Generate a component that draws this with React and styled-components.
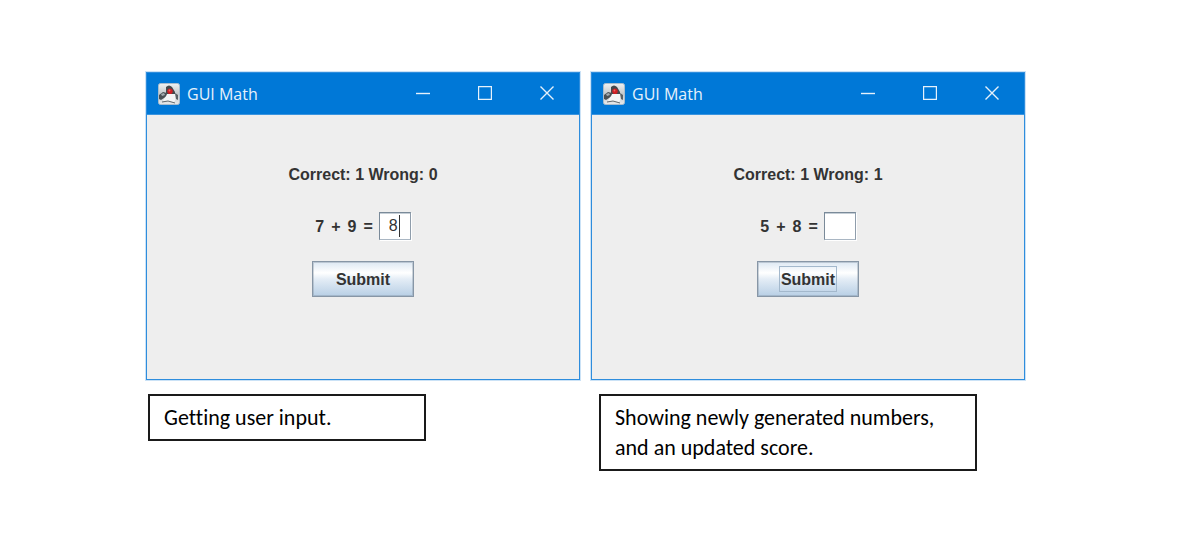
import React from "react";
import styled, { createGlobalStyle } from "styled-components";

const GlobalStyle = createGlobalStyle`
  *, *::before, *::after { box-sizing: border-box; }
  body { margin: 0; background: #fff; }
`;

const Page = styled.main`
  display: grid;
  grid-template-columns: 1fr 1fr;
  gap: 11px;
  align-items: start;
  padding: 72px 161px 72px 146px;
`;

const Example = styled.figure`
  display: flex;
  flex-direction: column;
  align-items: flex-start;
  gap: 14px;
  margin: 0;
`;

const Frame = styled.section`
  width: 100%;
  min-height: 308px;
  background: #eee;
  border: 1px solid #2e8ddd;
  box-shadow: 0 0 0 1px rgba(46, 141, 221, 0.25);
`;

const TitleBar = styled.header`
  display: flex;
  align-items: center;
  height: 42px;
  padding: 0 1px 0 11px;
  background: #0078d7;
  border-bottom: 1px solid #3a94df;
  color: #e6f1fb;
`;

const Title = styled.h1`
  flex: 1;
  margin: 0 0 0 7px;
  font: 400 16px/20px "Open Sans", "Noto Sans", sans-serif;
`;

const WindowButton = styled.button`
  display: flex;
  align-items: center;
  justify-content: center;
  width: 62px;
  height: 41px;
  padding: 0 0 2px;
  border: 0;
  background: none;
  color: inherit;
`;

const Form = styled.form`
  display: flex;
  flex-direction: column;
  align-items: center;
  padding-top: 50px;
  font: 700 16px/20px "Liberation Sans", Arial, sans-serif;
  color: #333;
`;

const Score = styled.p`
  margin: 0 0 27px;
`;

const Question = styled.div`
  display: flex;
  align-items: center;
  gap: 6px;
  margin-bottom: 21px;
`;

const Sum = styled.label`
  display: flex;
  gap: 7px;
  padding-top: 2px;
`;

const Field = styled.div`
  position: relative;
  display: flex;
`;

const Answer = styled.input`
  width: 32px;
  height: 28px;
  padding: 0 0 0 9px;
  border: 1px solid #7a8a99;
  border-right-color: #8f9dab;
  border-bottom-color: #a9b6c3;
  border-radius: 0;
  background: #fff;
  box-shadow: 1px 1px 0 #fff, inset 0 1px 0 #c5ced6;
  font: 400 16px/20px "Liberation Sans", Arial, sans-serif;
  color: #333;
`;

const Caret = styled.span`
  position: absolute;
  top: 3px;
  left: 20px;
  width: 1px;
  height: 22px;
  background: #333;
`;

const Submit = styled.button`
  display: flex;
  align-items: center;
  justify-content: center;
  width: 102px;
  height: 36px;
  padding: 0;
  border: 1px solid #8796a6;
  box-shadow: inset 0 0 0 1px rgba(122, 138, 153, 0.35);
  background: linear-gradient(#dde8f3 0%, #fff 32%, #e4edf6 50%, #b8cfe5 100%);
  font: inherit;
  color: #333;
`;

const SubmitText = styled.span`
  padding: 3px 1px 1px;
  border: 1px solid ${(p) => (p.$focused ? "#a3b8cc" : "transparent")};
`;

const Caption = styled.figcaption`
  width: ${(p) => p.$width};
  margin-left: ${(p) => p.$indent};
  padding: 7px 14px 6px;
  border: 2px solid #1a1a1a;
  background: #fff;
  font: 400 22px/30px Carlito, Calibri, Lato, sans-serif;
  font-variant-ligatures: none;
  color: #000;
`;

function JavaIcon() {
  return (
    <svg width="22" height="22" viewBox="0 0 22 22" aria-hidden="true">
      <defs>
        <linearGradient id="tile" x1="0" y1="0" x2="0" y2="1">
          <stop offset="0" stopColor="#f0f1f1" />
          <stop offset="0.5" stopColor="#c3c8cb" />
          <stop offset="1" stopColor="#e7e9ea" />
        </linearGradient>
      </defs>
      <rect x="0.5" y="0.5" width="21" height="21" rx="2" fill="url(#tile)" stroke="#a9bccc" />
      <path d="M8 4C10 2 12 2 14 4L17 9L17 12L8 12Z" fill="#44494c" />
      <path d="M1 12L5 9L9 10L9 13L6 15L3 17L1 16Z" fill="#4a5054" />
      <path d="M3 11L6 10L7 12L4 13Z" fill="#a4abaf" />
      <path d="M9 11C11 11 14 11 17 11C18 14 18 17 16 19L9 18L5 18C6 15 8 14 9 11Z" fill="#f4f5f5" />
      <path d="M17 10L20 12V17L18 16Z" fill="#5b6266" />
      <path d="M4 19L10 18L17 20" stroke="#62696d" strokeWidth="1" fill="none" />
      <ellipse cx="12" cy="8.300" rx="2.700" ry="2.800" fill="#cf1f24" />
      <circle cx="11.500" cy="7.500" r="0.900" fill="#ee6661" />
    </svg>
  );
}

const glyphs = {
  Minimize: <path d="M0 7.5H14" />,
  Maximize: <path d="M0.5 0.5H13.5V13.5H0.5Z" />,
  Close: <path d="M0.5 0.5L13.5 13.5M13.5 0.5L0.5 13.5" />,
};

function MathWindow({ correct, wrong, left, right, answer, typing, submitFocused }) {
  const id = `answer-${left}-${right}`;
  return (
    <Frame>
      <TitleBar>
        <JavaIcon />
        <Title>GUI Math</Title>
        {Object.entries(glyphs).map(([name, glyph]) => (
          <WindowButton key={name} type="button" aria-label={name}>
            <svg width="14" height="14" viewBox="0 0 14 14" fill="none" stroke="currentColor" strokeWidth="1.4">
              {glyph}
            </svg>
          </WindowButton>
        ))}
      </TitleBar>
      <Form onSubmit={(e) => e.preventDefault()}>
        <Score>Correct: {correct} Wrong: {wrong}</Score>
        <Question>
          <Sum htmlFor={id}>
            <span>{left}</span>
            <span>+</span>
            <span>{right}</span>
            <span>=</span>
          </Sum>
          <Field>
            <Answer id={id} type="text" defaultValue={answer} />
            {typing && <Caret />}
          </Field>
        </Question>
        <Submit type="submit">
          <SubmitText $focused={submitFocused}>Submit</SubmitText>
        </Submit>
      </Form>
    </Frame>
  );
}

export default function App() {
  return (
    <>
      <GlobalStyle />
      <Page>
        <Example>
          <MathWindow correct={1} wrong={0} left={7} right={9} answer="8" typing />
          <Caption $width="64%" $indent="2px">Getting user input.</Caption>
        </Example>
        <Example>
          <MathWindow correct={1} wrong={1} left={5} right={8} answer="" submitFocused />
          <Caption $width="87%" $indent="8px">
            Showing newly generated numbers,
            <br />
            and an updated score.
          </Caption>
        </Example>
      </Page>
    </>
  );
}
